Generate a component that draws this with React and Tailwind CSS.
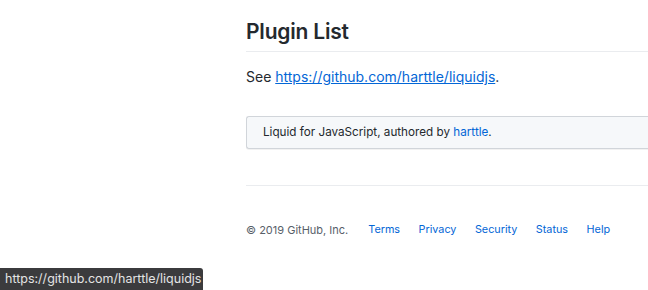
export default function App() {
  const font = { fontFamily: 'Inter, "Liberation Sans", sans-serif' };
  return (
    <div className="relative w-[648px] h-[290px] overflow-hidden bg-white" style={font}>
      <div className="pl-[246px] pt-[19px]">
        <h2 className="text-[21px] leading-[26px] font-semibold text-[#24292e] pb-[6px] border-b border-[#eaecef] tracking-[-0.2px]">
          Plugin List
        </h2>
        <p className="mt-[14px] text-[14px] leading-[21px] text-[#24292e]">
          See{" "}
          <a href="#" className="text-[#0366d6] underline">
            https://github.com/harttle/liquidjs
          </a>
          .
        </p>
        <div className="mt-[29px] h-[33px] flex items-center pl-[16px] bg-[#f6f8fa] border border-[#d1d5da] rounded-l-[3px] border-r-0 shadow-[0_1px_0_rgba(27,31,35,0.06)] text-[11.7px] text-[#24292e]">
          <span>
            Liquid for JavaScript, authored by{" "}
            <a href="#" className="text-[#0366d6]">harttle</a>.
          </span>
        </div>
        <div className="mt-[36px] border-t border-[#eaecef] pt-[36px] flex items-center text-[11px] leading-[16px]">
          <span className="text-[#586069]">© 2019 GitHub, Inc.</span>
          <a href="#" className="ml-[20px] text-[#0366d6] text-[10.8px]">Terms</a>
          <a href="#" className="ml-[18.5px] text-[#0366d6] text-[10.8px]">Privacy</a>
          <a href="#" className="ml-[18.5px] text-[#0366d6] text-[10.8px]">Security</a>
          <a href="#" className="ml-[18.5px] text-[#0366d6] text-[10.8px]">Status</a>
          <a href="#" className="ml-[18.5px] text-[#0366d6] text-[10.8px]">Help</a>
        </div>
      </div>
      <div className="absolute left-0 bottom-0 h-[22px] w-[203px] bg-[#3b3b3d] rounded-tr-[3px] flex items-center pl-[5px] text-[12.5px] text-[#e4e4e4]">
        https://github.com/harttle/liquidjs
      </div>
    </div>
  );
}
